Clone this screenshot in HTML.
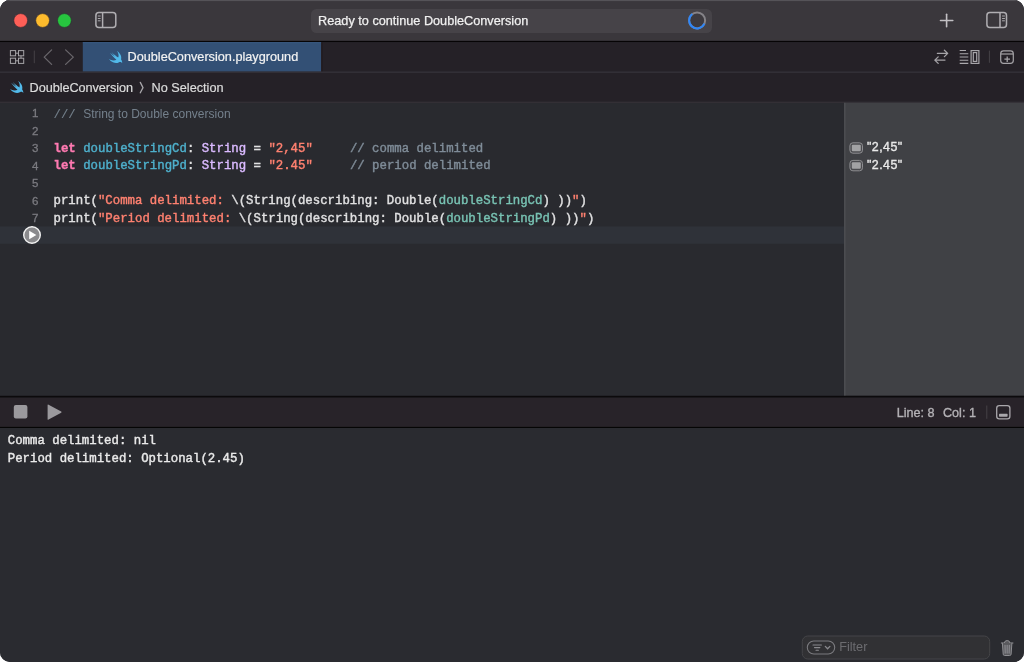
<!DOCTYPE html>
<html>
<head>
<meta charset="utf-8">
<title>DoubleConversion.playground</title>
<style>
html,body{margin:0;padding:0;background:#fff;}
body{width:1024px;height:662px;overflow:hidden;position:relative;font-family:"Liberation Sans",sans-serif;}
#win{will-change:transform;position:absolute;left:0;top:0;width:1024px;height:662px;border-radius:10px;overflow:hidden;background:#2a2b30;}
.abs{position:absolute;}
#status{left:311.2px;top:8.6px;width:401px;height:24px;border-radius:5.5px;background:#464348;}
#status span{position:absolute;left:6.9px;top:5.2px;line-height:15px;font-size:12.7px;color:#f0f0f0;white-space:nowrap;-webkit-text-stroke:0.25px currentColor;}
.ui{font-size:12.7px;color:#dcdcdc;white-space:nowrap;line-height:15px;-webkit-text-stroke:0.2px currentColor;}
.mono{font-family:"Liberation Mono",monospace;font-size:12.35px;white-space:pre;}
.ln{position:absolute;left:0;width:38.3px;text-align:right;font-family:"Liberation Sans",sans-serif;font-size:11.5px;color:#7b7b81;line-height:17.5px;margin-top:-1px;-webkit-text-stroke:0.3px currentColor;}
.cl{position:absolute;left:53.5px;line-height:17.5px;height:17.5px;color:#e1e1e2;-webkit-text-stroke:0.4px currentColor;}
.k{color:#ff7ab2;font-weight:bold;-webkit-text-stroke:0.35px currentColor;}
.d{color:#4eb0cc;}
.t{color:#dabaff;}
.s{color:#ff8170;}
.c{color:#7f8c98;}
.v{color:#78c2b3;}
.res{font-size:12.4px;letter-spacing:0.45px;color:#e9e9e9;white-space:nowrap;line-height:15px;-webkit-text-stroke:0.35px currentColor;}
.lc{font-size:12.6px;color:#b4b2b6;white-space:nowrap;line-height:15px;-webkit-text-stroke:0.35px currentColor;}
.con{color:#eaeaea;line-height:17.5px;-webkit-text-stroke:0.4px currentColor;}
</style>
</head>
<body>
<div id="win">
  <svg class="abs" style="left:0;top:0;" width="1024" height="662" viewBox="0 0 1024 662" shape-rendering="geometricPrecision">
    <rect x="0" y="0" width="1024" height="662" fill="#2a2b30"/>
    <!-- title bar -->
    <rect x="0" y="0" width="1024" height="40.8" fill="#3a373c"/>
    <rect x="0" y="0" width="1024" height="1.1" fill="#555358"/>
    <rect x="0" y="39.9" width="1024" height="0.9" fill="#413e42"/>
    <rect x="0" y="40.8" width="1024" height="1.4" fill="#060405"/>
    <!-- tab bar -->
    <rect x="0" y="42.2" width="1024" height="29.4" fill="#252127"/>
    <rect x="82.8" y="42.2" width="238.4" height="29.4" fill="#335075"/>
    <rect x="82.8" y="42.2" width="238.4" height="1" fill="#3a5a82"/>
    <rect x="321.2" y="42.2" width="1.6" height="29.4" fill="#221c21"/>
    <rect x="0" y="71.6" width="1024" height="1.3" fill="#37343a"/>
    <!-- jump bar -->
    <rect x="0" y="72.9" width="1024" height="28.8" fill="#252127"/>
    <rect x="0" y="101.7" width="1024" height="1.3" fill="#332f35"/>
    <!-- editor -->
    <rect x="0" y="103" width="844" height="292.7" fill="#292a2f"/>
    <rect x="0" y="226.4" width="844" height="17.4" fill="#2f3239"/>
    <!-- results sidebar -->
    <rect x="844" y="102.8" width="180" height="292.9" fill="#404145"/>
    <rect x="844" y="102.8" width="1.6" height="292.9" fill="#4b4c50"/>
    <rect x="0" y="395.8" width="1024" height="1.9" fill="#0c0a0c"/>
    <!-- debug bar -->
    <rect x="0" y="397.7" width="1024" height="29.2" fill="#282329"/>
    <rect x="0" y="426.9" width="1024" height="1" fill="#020202"/>
  </svg>

  <!-- traffic lights -->
  <svg class="abs" style="left:0;top:0;" width="90" height="41" viewBox="0 0 90 41">
    <circle cx="20.7" cy="20.5" r="6.9" fill="#fe5f57" stroke="#2b2630" stroke-opacity="0.75" stroke-width="0.8"/>
    <circle cx="42.6" cy="20.5" r="6.9" fill="#fdbb2d" stroke="#2b2630" stroke-opacity="0.75" stroke-width="0.8"/>
    <circle cx="64.4" cy="20.5" r="6.9" fill="#27c53f" stroke="#2b2630" stroke-opacity="0.75" stroke-width="0.8"/>
  </svg>

  <!-- status -->
  <div id="status" class="abs"><span>Ready to continue DoubleConversion</span></div>

  <!-- tab title -->
  <div class="abs ui" id="tabtitle" style="left:127.5px;top:50.2px;color:#f2f2f2;">DoubleConversion.playground</div>

  <!-- breadcrumb -->
  <div class="abs ui" id="bc1" style="left:29.6px;top:81.2px;letter-spacing:-0.06px;">DoubleConversion</div>
  <div class="abs ui" id="bc2" style="left:151.6px;top:81.2px;">No Selection</div>

  <!-- editor -->
  <div id="code">
    <div class="ln" style="top:106px">1</div>
    <div class="cl mono" style="top:105.5px"><span class="c" style="color:#74808c;-webkit-text-stroke:0.1px currentColor">/// <span style="font-family:'Liberation Sans',sans-serif;font-size:12px;-webkit-text-stroke:0;">String to Double conversion</span></span></div>
    <div class="ln" style="top:123.5px">2</div>
    <div class="ln" style="top:141px">3</div>
    <div class="cl mono" style="top:140.5px"><span class="k">let</span> <span class="d">doubleStringCd</span>: <span class="t">String</span> = <span class="s">"2,45"</span>     <span class="c">// comma delimited</span></div>
    <div class="ln" style="top:158.5px">4</div>
    <div class="cl mono" style="top:158px"><span class="k">let</span> <span class="d">doubleStringPd</span>: <span class="t">String</span> = <span class="s">"2.45"</span>     <span class="c">// period delimited</span></div>
    <div class="ln" style="top:176px">5</div>
    <div class="ln" style="top:193.5px">6</div>
    <div class="cl mono" style="top:193px">print(<span class="s">"Comma delimited: </span>\(String(describing: Double(<span class="v">doubleStringCd</span>) ))<span class="s">"</span>)</div>
    <div class="ln" style="top:211px">7</div>
    <div class="cl mono" style="top:210.5px">print(<span class="s">"Period delimited: </span>\(String(describing: Double(<span class="v">doubleStringPd</span>) ))<span class="s">"</span>)</div>
  </div>

  <!-- all vector icons -->
  <svg class="abs" style="left:0;top:0;" width="1024" height="662" viewBox="0 0 1024 662" fill="none">
    <!-- sidebar toggle (left) -->
    <g stroke="#b0aeb2" stroke-width="1.5" fill="none">
      <rect x="95.9" y="12.6" width="19.9" height="15" rx="3"/>
      <line x1="102.6" y1="12.6" x2="102.6" y2="27.6"/>
    </g>
    <g stroke="#a9a7ab" stroke-width="1" >
      <line x1="97.8" y1="16" x2="100.6" y2="16"/>
      <line x1="97.8" y1="18.5" x2="100.6" y2="18.5"/>
      <line x1="97.8" y1="20.8" x2="100.6" y2="20.8"/>
    </g>
    <!-- plus -->
    <g stroke="#c2c0c4" stroke-width="1.6" stroke-linecap="round">
      <line x1="940.5" y1="20.5" x2="952.8" y2="20.5"/>
      <line x1="946.6" y1="14.3" x2="946.6" y2="26.7"/>
    </g>
    <!-- inspector toggle (right) -->
    <g stroke="#b0aeb2" stroke-width="1.5" fill="none">
      <rect x="986.9" y="12.6" width="19.6" height="15" rx="3"/>
      <line x1="1000" y1="12.6" x2="1000" y2="27.6"/>
    </g>
    <g stroke="#a9a7ab" stroke-width="1">
      <line x1="1002.1" y1="16" x2="1004.9" y2="16"/>
      <line x1="1002.1" y1="18.5" x2="1004.9" y2="18.5"/>
      <line x1="1002.1" y1="20.8" x2="1004.9" y2="20.8"/>
    </g>
    <!-- spinner -->
    <circle cx="697.1" cy="20.4" r="8" stroke="#858388" stroke-width="2" fill="#3d3a3f"/>
    <path d="M704.4 23.7 A8 8 0 1 1 692.3 14" stroke="#2f86f6" stroke-width="2" fill="none"/>

    <!-- related items grid -->
    <g stroke="#a5a3a7" stroke-width="1" fill="none">
      <rect x="10.4" y="50.6" width="5.2" height="5.2"/>
      <rect x="18.5" y="50.6" width="5.2" height="5.2"/>
      <rect x="10.4" y="58.2" width="5.2" height="5.2"/>
      <rect x="18.5" y="58.2" width="5.2" height="5.2"/>
      <path d="M15.6 53.2H18.5M21 55.8V58.2M15.6 60.8H18.5"/>
    </g>
    <line x1="34.3" y1="50.6" x2="34.3" y2="63.2" stroke="#454247" stroke-width="1"/>
    <!-- back / forward -->
    <g stroke="#69666b" stroke-width="1.3" fill="none" stroke-linecap="round" stroke-linejoin="round">
      <polyline points="51.6,49.9 44.2,57.1 51.6,64.4"/>
      <polyline points="65.6,49.9 73.3,57.1 65.6,64.4"/>
    </g>
    <!-- swift icons -->
    <g fill="#52b9e9">
      <path transform="translate(107.0,48.55) scale(0.74)" d="M13.543 3.41c4.114 2.47 6.545 7.162 5.549 11.131-.024.093-.05.181-.076.272l.002.001c2.062 2.538 1.5 5.258 1.236 4.745-1.072-2.086-3.066-1.568-4.088-1.043a6.803 6.803 0 0 1-.281.158l-.02.012-.002.002c-2.115 1.123-4.957 1.205-7.812-.022a12.568 12.568 0 0 1-5.64-4.838c.649.48 1.35.902 2.097 1.252 3.019 1.414 6.051 1.311 8.197-.002C9.651 12.73 7.101 9.67 5.146 7.191a10.628 10.628 0 0 1-1.005-1.384c2.34 2.142 6.038 4.83 7.365 5.576C8.69 8.408 6.208 4.743 6.324 4.86c4.436 4.47 8.528 6.996 8.528 6.996.154.085.27.154.36.213.085-.215.16-.437.224-.668.708-2.588-.09-5.548-1.893-7.992z"/>
      <path transform="translate(8.1,78.5) scale(0.74)" d="M13.543 3.41c4.114 2.47 6.545 7.162 5.549 11.131-.024.093-.05.181-.076.272l.002.001c2.062 2.538 1.5 5.258 1.236 4.745-1.072-2.086-3.066-1.568-4.088-1.043a6.803 6.803 0 0 1-.281.158l-.02.012-.002.002c-2.115 1.123-4.957 1.205-7.812-.022a12.568 12.568 0 0 1-5.64-4.838c.649.48 1.35.902 2.097 1.252 3.019 1.414 6.051 1.311 8.197-.002C9.651 12.73 7.101 9.67 5.146 7.191a10.628 10.628 0 0 1-1.005-1.384c2.34 2.142 6.038 4.83 7.365 5.576C8.69 8.408 6.208 4.743 6.324 4.86c4.436 4.47 8.528 6.996 8.528 6.996.154.085.27.154.36.213.085-.215.16-.437.224-.668.708-2.588-.09-5.548-1.893-7.992z"/>
    </g>
    <!-- breadcrumb chevron -->
    <polyline points="140.3,82.4 143,87.6 140.3,92.8" stroke="#a8a6aa" stroke-width="1.3" stroke-linecap="round" stroke-linejoin="round" fill="none"/>

    <!-- swap arrows -->
    <g stroke="#a5a3a7" stroke-width="1.3" fill="none" stroke-linecap="round" stroke-linejoin="round">
      <path d="M937.4 53.4H947.5M944.4 50.2L947.7 53.4L944.4 56.6"/>
      <path d="M945 60.1H934.9M938.2 56.9L934.8 60.1L938.2 63.4"/>
    </g>
    <!-- minimap / editor options -->
    <g stroke="#aba9ad" stroke-width="1.15" fill="none">
      <path d="M959.7 50.5H966M959.7 53.7H968.3M959.7 57H968.3M959.7 60.2H968.3M959.7 63.4H968.3"/>
      <rect x="971.1" y="50.6" width="7.8" height="12.8"/>
      <rect x="973.3" y="52.6" width="3.4" height="8.8"/>
    </g>
    <line x1="989.4" y1="50.6" x2="989.4" y2="62.8" stroke="#454247" stroke-width="1"/>
    <!-- add editor -->
    <g stroke="#a5a3a7" stroke-width="1.2" fill="none">
      <rect x="1000.7" y="50.9" width="12.6" height="12.4" rx="2.8"/>
      <line x1="1000.7" y1="54" x2="1013.3" y2="54"/>
      <path d="M1004.4 59.2H1010M1007.2 56.4V62" stroke-width="1.3"/>
    </g>

    <!-- gutter run button -->
    <circle cx="32" cy="235" r="8.3" fill="#8a8a8d" stroke="#f2f2f2" stroke-width="1.4"/>
    <path d="M29.2 230.8V239.2L36.4 235Z" fill="#ffffff"/>

    <!-- result quick look icons -->
    <g>
      <rect x="849.9" y="142.8" width="12.6" height="10.4" rx="3" stroke="#8e8e91" stroke-width="1" fill="#4b4b4f"/>
      <rect x="851.8" y="144.7" width="9" height="6.5" rx="1" fill="#a2a2a4"/>
      <rect x="849.9" y="160.4" width="12.6" height="10.4" rx="3" stroke="#8e8e91" stroke-width="1" fill="#4b4b4f"/>
      <rect x="851.8" y="162.3" width="9" height="6.5" rx="1" fill="#a2a2a4"/>
    </g>

    <!-- debug bar: stop / play -->
    <rect x="13.8" y="405" width="13.6" height="13.6" rx="2" fill="#9b999d"/>
    <path d="M47.6 405.2V419.2Q47.6 420.2 48.6 419.6L61.2 412.8Q62 412.2 61.2 411.6L48.6 404.8Q47.6 404.2 47.6 405.2Z" fill="#9b999d"/>
    <line x1="986.8" y1="405.5" x2="986.8" y2="418.8" stroke="#454247" stroke-width="1"/>
    <!-- hide debug area icon -->
    <rect x="996.7" y="405.7" width="13.2" height="13.2" rx="2.6" stroke="#a9a7ab" stroke-width="1.3" fill="none"/>
    <rect x="999" y="413.8" width="8.6" height="2.9" rx="0.6" fill="#a9a7ab"/>

    <!-- filter field -->
    <rect x="802.3" y="636" width="187.4" height="23" rx="5.5" fill="#313134" stroke="#454548" stroke-width="1"/>
    <rect x="807.3" y="641" width="27.4" height="13" rx="6.5" stroke="#7a7a7e" stroke-width="1.1" fill="none"/>
    <g stroke="#8a8a8e" stroke-width="1.1" stroke-linecap="round" fill="none">
      <path d="M813 645H821.4M814.5 647.6H819.9M816 650.2H818.4"/>
      <polyline points="825.3,646.4 827.6,648.8 829.9,646.4" stroke-width="1.3"/>
    </g>
    <!-- trash -->
    <g stroke="#8e8e92" stroke-width="1" fill="none" stroke-linecap="round" stroke-linejoin="round">
      <path d="M1001.3 643H1013"/>
      <path d="M1004.3 642.8Q1004.6 640.5 1007.15 640.5Q1009.7 640.5 1010 642.8" fill="#5a5a5e"/>
      <path d="M1002.4 643.2L1003.2 654.2Q1003.3 655.5 1004.6 655.5H1009.7Q1011 655.5 1011.1 654.2L1011.9 643.2" fill="#59595d"/>
      <path d="M1005 645.3L1005.2 653.2M1007.15 645.3V653.2M1009.3 645.3L1009.1 653.2" stroke="#9a9a9e" stroke-width="0.9"/>
    </g>
  </svg>

  <!-- results sidebar text -->
  <div class="abs res" style="left:867px;top:140.1px;">"2,45"</div>
  <div class="abs res" style="left:867px;top:157.7px;">"2.45"</div>

  <!-- debug bar labels -->
  <div class="abs lc" style="left:896.8px;top:405.8px;">Line: 8</div>
  <div class="abs lc" style="left:943px;top:405.8px;">Col: 1</div>

  <!-- console output -->
  <div class="abs mono con" style="left:7.8px;top:433.3px;">Comma delimited: nil</div>
  <div class="abs mono con" style="left:7.8px;top:450.8px;">Period delimited: Optional(2.45)</div>

  <!-- filter placeholder -->
  <div class="abs" style="left:839.2px;top:640px;font-size:12.7px;line-height:15px;color:#6c6c70;">Filter</div>
</div>
</body>
</html>
